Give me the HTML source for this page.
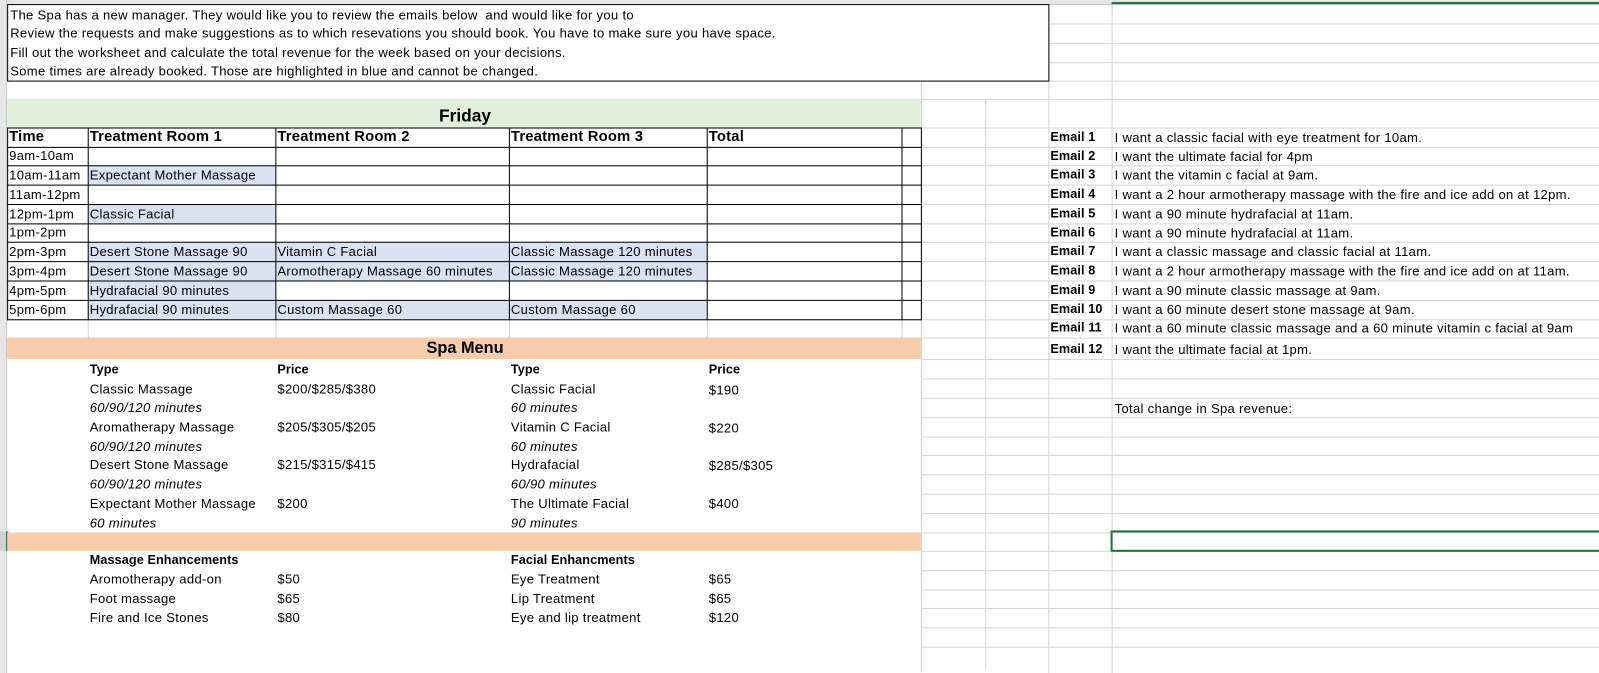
<!DOCTYPE html>
<html><head><meta charset="utf-8"><style>
html,body{margin:0;padding:0;background:#fff;overflow:hidden;width:1599px;height:664px}
#w{position:absolute;left:0;top:0;width:1568px;height:651px;transform:scale(1.0198,1.02);transform-origin:0 0;font-family:"Liberation Sans",sans-serif;color:#000}
.h{position:absolute;height:1px;background:#d4d4d4}
.v{position:absolute;width:1px;background:#d4d4d4}
.bh{position:absolute;height:1px;background:#000}
.bv{position:absolute;width:1px;background:#000}
.f{position:absolute}
.t{position:absolute;white-space:nowrap;font-size:12.8px;letter-spacing:0.3px;line-height:19px;padding-left:2px}
.b{font-weight:bold;font-size:12.4px;letter-spacing:0.1px}
.hd{font-weight:bold;font-size:14.5px;letter-spacing:0.2px}
.i{font-style:italic}
</style></head><body><div id="w">
<div class="h" style="left:903px;width:700px;top:23px"></div>
<div class="h" style="left:903px;width:700px;top:42px"></div>
<div class="h" style="left:903px;width:700px;top:61px"></div>
<div class="h" style="left:903px;width:700px;top:79px"></div>
<div class="h" style="left:0;width:1603px;top:97px"></div>
<div class="h" style="left:0;width:1603px;top:125px"></div>
<div class="h" style="left:903px;width:700px;top:144px"></div>
<div class="h" style="left:903px;width:700px;top:162px"></div>
<div class="h" style="left:903px;width:700px;top:181px"></div>
<div class="h" style="left:903px;width:700px;top:200px"></div>
<div class="h" style="left:903px;width:700px;top:219px"></div>
<div class="h" style="left:903px;width:700px;top:237px"></div>
<div class="h" style="left:903px;width:700px;top:256px"></div>
<div class="h" style="left:903px;width:700px;top:275px"></div>
<div class="h" style="left:903px;width:700px;top:294px"></div>
<div class="h" style="left:0;width:1603px;top:313px"></div>
<div class="h" style="left:0;width:1603px;top:331px"></div>
<div class="h" style="left:903px;width:700px;top:352px"></div>
<div class="h" style="left:903px;width:700px;top:371px"></div>
<div class="h" style="left:903px;width:700px;top:390px"></div>
<div class="h" style="left:903px;width:700px;top:409px"></div>
<div class="h" style="left:903px;width:700px;top:428px"></div>
<div class="h" style="left:903px;width:700px;top:446px"></div>
<div class="h" style="left:903px;width:700px;top:465px"></div>
<div class="h" style="left:903px;width:700px;top:484px"></div>
<div class="h" style="left:903px;width:700px;top:503px"></div>
<div class="h" style="left:903px;width:700px;top:522px"></div>
<div class="h" style="left:903px;width:700px;top:540px"></div>
<div class="h" style="left:903px;width:700px;top:559px"></div>
<div class="h" style="left:903px;width:700px;top:578px"></div>
<div class="h" style="left:903px;width:700px;top:596px"></div>
<div class="h" style="left:903px;width:700px;top:615px"></div>
<div class="h" style="left:903px;width:700px;top:634px"></div>
<div class="v" style="left:86px;top:313px;height:18px"></div>
<div class="v" style="left:270px;top:313px;height:18px"></div>
<div class="v" style="left:499px;top:313px;height:18px"></div>
<div class="v" style="left:693px;top:313px;height:18px"></div>
<div class="v" style="left:884px;top:313px;height:18px"></div>
<div class="v" style="left:903px;top:79px;height:580px"></div>
<div class="v" style="left:966px;top:97px;height:560px"></div>
<div class="v" style="left:1028px;top:0;height:660px"></div>
<div class="v" style="left:1090px;top:0;height:660px"></div>
<div class="v" style="left:1568px;top:0;height:660px"></div>
<div class="f" style="left:0;top:0;width:1603px;height:4px;background:#e6e6e6;border-bottom:1px solid #c8c8c8"></div>
<div class="f" style="left:1090px;top:2px;width:478px;height:2px;background:#217346"></div>
<div class="f" style="left:0;top:0;width:6px;height:660px;background:#e6e6e6;border-right:1px solid #c8c8c8"></div>
<div class="f" style="left:0;top:521px;width:6px;height:19px;background:#d2d2d2;border-right:2px solid #217346"></div>
<div class="f" style="left:7px;top:4px;width:1020px;height:74px;border:1px solid #000;background:#fff"></div>
<div class="t" style="left:8px;top:5px">The Spa has a new manager. They would like you to review the emails below&nbsp; and would like for you to</div>
<div class="t" style="left:8px;top:23px">Review the requests and make suggestions as to which resevations you should book. You have to make sure you have space.</div>
<div class="t" style="left:8px;top:42px">Fill out the worksheet and calculate the total revenue for the week based on your decisions.</div>
<div class="t" style="left:8px;top:60px">Some times are already booked. Those are highlighted in blue and cannot be changed.</div>
<div class="f" style="left:7px;top:97px;width:896px;height:28px;background:#e2efda"></div>
<div class="t" style="left:7px;width:894px;top:104px;text-align:center;font-size:17px;font-weight:bold;line-height:20px;letter-spacing:0">Friday</div>
<div class="f" style="left:86px;top:162px;width:184px;height:19px;background:#d9e1f2"></div>
<div class="f" style="left:86px;top:200px;width:184px;height:19px;background:#d9e1f2"></div>
<div class="f" style="left:86px;top:237px;width:607px;height:38px;background:#d9e1f2"></div>
<div class="f" style="left:86px;top:275px;width:184px;height:38px;background:#d9e1f2"></div>
<div class="f" style="left:270px;top:294px;width:423px;height:19px;background:#d9e1f2"></div>
<div class="bh" style="left:7px;width:897px;top:125px"></div>
<div class="bh" style="left:7px;width:897px;top:144px"></div>
<div class="bh" style="left:7px;width:897px;top:162px"></div>
<div class="bh" style="left:7px;width:897px;top:181px"></div>
<div class="bh" style="left:7px;width:897px;top:200px"></div>
<div class="bh" style="left:7px;width:897px;top:219px"></div>
<div class="bh" style="left:7px;width:897px;top:237px"></div>
<div class="bh" style="left:7px;width:897px;top:256px"></div>
<div class="bh" style="left:7px;width:897px;top:275px"></div>
<div class="bh" style="left:7px;width:897px;top:294px"></div>
<div class="bh" style="left:7px;width:897px;top:313px"></div>
<div class="bv" style="left:7px;top:125px;height:189px"></div>
<div class="bv" style="left:86px;top:125px;height:189px"></div>
<div class="bv" style="left:270px;top:125px;height:189px"></div>
<div class="bv" style="left:499px;top:125px;height:189px"></div>
<div class="bv" style="left:693px;top:125px;height:189px"></div>
<div class="bv" style="left:884px;top:125px;height:189px"></div>
<div class="bv" style="left:903px;top:125px;height:189px"></div>
<div class="t hd" style="left:7px;top:125px">Time</div>
<div class="t hd" style="left:86px;top:125px">Treatment Room 1</div>
<div class="t hd" style="left:270px;top:125px">Treatment Room 2</div>
<div class="t hd" style="left:499px;top:125px">Treatment Room 3</div>
<div class="t hd" style="left:693px;top:125px">Total</div>
<div class="t" style="left:7px;top:143px">9am-10am</div>
<div class="t" style="left:7px;top:162px">10am-11am</div>
<div class="t" style="left:7px;top:181px">11am-12pm</div>
<div class="t" style="left:7px;top:200px">12pm-1pm</div>
<div class="t" style="left:7px;top:218px">1pm-2pm</div>
<div class="t" style="left:7px;top:237px">2pm-3pm</div>
<div class="t" style="left:7px;top:256px">3pm-4pm</div>
<div class="t" style="left:7px;top:275px">4pm-5pm</div>
<div class="t" style="left:7px;top:294px">5pm-6pm</div>
<div class="t" style="left:86px;top:162px">Expectant Mother Massage</div>
<div class="t" style="left:86px;top:200px">Classic Facial</div>
<div class="t" style="left:86px;top:237px">Desert Stone Massage 90</div>
<div class="t" style="left:86px;top:256px">Desert Stone Massage 90</div>
<div class="t" style="left:86px;top:275px">Hydrafacial 90 minutes</div>
<div class="t" style="left:86px;top:294px">Hydrafacial 90 minutes</div>
<div class="t" style="left:270px;top:237px">Vitamin C Facial</div>
<div class="t" style="left:270px;top:256px">Aromotherapy Massage 60 minutes</div>
<div class="t" style="left:270px;top:294px">Custom Massage 60</div>
<div class="t" style="left:499px;top:237px">Classic Massage 120 minutes</div>
<div class="t" style="left:499px;top:256px">Classic Massage 120 minutes</div>
<div class="t" style="left:499px;top:294px">Custom Massage 60</div>
<div class="f" style="left:7px;top:331px;width:896px;height:21px;background:#f8cbad"></div>
<div class="t" style="left:7px;width:894px;top:332px;text-align:center;font-size:16px;font-weight:bold;line-height:20px;letter-spacing:0">Spa Menu</div>
<div class="f" style="left:7px;top:522px;width:896px;height:18px;background:#f8cbad"></div>
<div class="t b" style="left:86px;top:353px">Type</div>
<div class="t b" style="left:270px;top:353px">Price</div>
<div class="t b" style="left:499px;top:353px">Type</div>
<div class="t b" style="left:693px;top:353px">Price</div>
<div class="t" style="left:86px;top:372px">Classic Massage</div>
<div class="t" style="left:270px;top:372px">$200/$285/$380</div>
<div class="t" style="left:499px;top:372px">Classic Facial</div>
<div class="t" style="left:693px;top:373px">$190</div>
<div class="t i" style="left:86px;top:390px">60/90/120 minutes</div>
<div class="t i" style="left:499px;top:390px">60 minutes</div>
<div class="t" style="left:86px;top:409px">Aromatherapy Massage</div>
<div class="t" style="left:270px;top:409px">$205/$305/$205</div>
<div class="t" style="left:499px;top:409px">Vitamin C Facial</div>
<div class="t" style="left:693px;top:410px">$220</div>
<div class="t i" style="left:86px;top:428px">60/90/120 minutes</div>
<div class="t i" style="left:499px;top:428px">60 minutes</div>
<div class="t" style="left:86px;top:446px">Desert Stone Massage</div>
<div class="t" style="left:270px;top:446px">$215/$315/$415</div>
<div class="t" style="left:499px;top:446px">Hydrafacial</div>
<div class="t" style="left:693px;top:447px">$285/$305</div>
<div class="t i" style="left:86px;top:465px">60/90/120 minutes</div>
<div class="t i" style="left:499px;top:465px">60/90 minutes</div>
<div class="t" style="left:86px;top:484px">Expectant Mother Massage</div>
<div class="t" style="left:270px;top:484px">$200</div>
<div class="t" style="left:499px;top:484px">The Ultimate Facial</div>
<div class="t" style="left:693px;top:484px">$400</div>
<div class="t i" style="left:86px;top:503px">60 minutes</div>
<div class="t i" style="left:499px;top:503px">90 minutes</div>
<div class="t b" style="left:86px;top:540px">Massage Enhancements</div>
<div class="t b" style="left:499px;top:540px">Facial Enhancments</div>
<div class="t" style="left:86px;top:558px">Aromotherapy add-on</div>
<div class="t" style="left:270px;top:558px">$50</div>
<div class="t" style="left:499px;top:558px">Eye Treatment</div>
<div class="t" style="left:693px;top:558px">$65</div>
<div class="t" style="left:86px;top:577px">Foot massage</div>
<div class="t" style="left:270px;top:577px">$65</div>
<div class="t" style="left:499px;top:577px">Lip Treatment</div>
<div class="t" style="left:693px;top:577px">$65</div>
<div class="t" style="left:86px;top:596px">Fire and Ice Stones</div>
<div class="t" style="left:270px;top:596px">$80</div>
<div class="t" style="left:499px;top:596px">Eye and lip treatment</div>
<div class="t" style="left:693px;top:596px">$120</div>
<div class="t b" style="left:1028px;top:125px">Email 1</div>
<div class="t b" style="left:1028px;top:144px">Email 2</div>
<div class="t b" style="left:1028px;top:162px">Email 3</div>
<div class="t b" style="left:1028px;top:181px">Email 4</div>
<div class="t b" style="left:1028px;top:200px">Email 5</div>
<div class="t b" style="left:1028px;top:219px">Email 6</div>
<div class="t b" style="left:1028px;top:237px">Email 7</div>
<div class="t b" style="left:1028px;top:256px">Email 8</div>
<div class="t b" style="left:1028px;top:275px">Email 9</div>
<div class="t b" style="left:1028px;top:294px">Email 10</div>
<div class="t b" style="left:1028px;top:312px">Email 11</div>
<div class="t b" style="left:1028px;top:333px">Email 12</div>
<div class="t" style="left:1091px;top:125px">I want a classic facial with eye treatment for 10am.</div>
<div class="t" style="left:1091px;top:144px">I want the ultimate facial for 4pm</div>
<div class="t" style="left:1091px;top:162px">I want the vitamin c facial at 9am.</div>
<div class="t" style="left:1091px;top:181px">I want a 2 hour armotherapy massage with the fire and ice add on at 12pm.</div>
<div class="t" style="left:1091px;top:200px">I want a 90 minute hydrafacial at 11am.</div>
<div class="t" style="left:1091px;top:219px">I want a 90 minute hydrafacial at 11am.</div>
<div class="t" style="left:1091px;top:237px">I want a classic massage and classic facial at 11am.</div>
<div class="t" style="left:1091px;top:256px">I want a 2 hour armotherapy massage with the fire and ice add on at 11am.</div>
<div class="t" style="left:1091px;top:275px">I want a 90 minute classic massage at 9am.</div>
<div class="t" style="left:1091px;top:294px">I want a 60 minute desert stone massage at 9am.</div>
<div class="t" style="left:1091px;top:312px">I want a 60 minute classic massage and a 60 minute vitamin c facial at 9am</div>
<div class="t" style="left:1091px;top:333px">I want the ultimate facial at 1pm.</div>
<div class="t" style="left:1091px;top:391px">Total change in Spa revenue:</div>
<div class="f" style="left:1089px;top:520px;width:520px;height:17px;border:2px solid #217346"></div>
</div></body></html>
